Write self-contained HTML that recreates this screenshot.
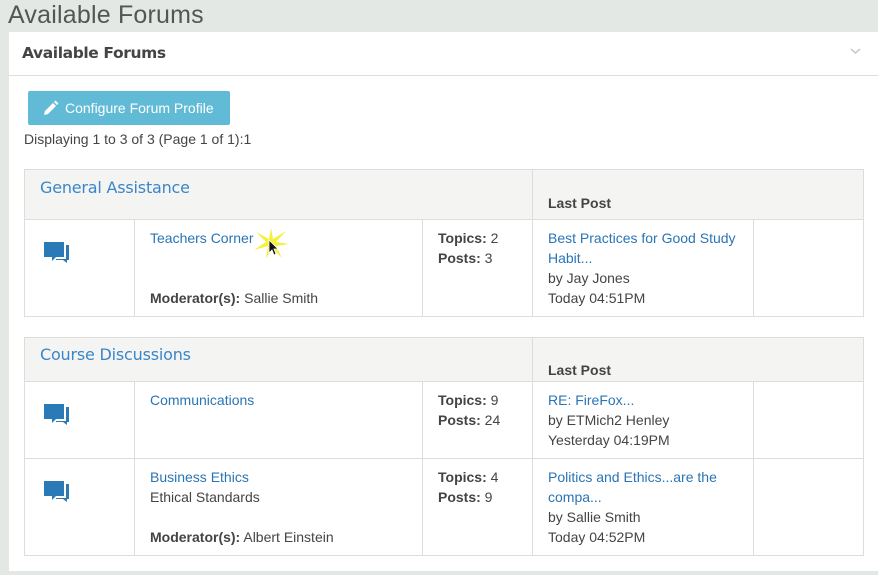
<!DOCTYPE html>
<html><head><style>
*{margin:0;padding:0;box-sizing:border-box}
body{width:878px;height:575px;background:#e4e8e5;font-family:"Liberation Sans",sans-serif;font-size:14px;color:#444;position:relative;overflow:hidden}
.a{position:absolute}
.panel{left:9px;top:32px;width:869px;height:539px;background:#fff}
.lnk{color:#2a75b5}
.cell{position:absolute;border:1px solid #ddd}
.hd{background:#f4f4f3}
.t{position:absolute;white-space:nowrap;line-height:20px}
b{font-weight:bold;color:#444}
.ic{position:absolute;width:26px;height:22px}
</style></head><body>
<div class="a" style="left:8px;top:0;font-size:25px;color:#555;line-height:30px;letter-spacing:0.2px">Available Forums</div>
<div class="a panel"></div>
<div class="a" style="left:22px;top:44px;font-size:15.5px;font-weight:bold;color:#444;font-family:'DejaVu Sans',sans-serif;letter-spacing:-0.4px">Available Forums</div>
<svg class="a" style="left:850px;top:48px" width="11" height="7" viewBox="0 0 11 7"><path d="M1 1L5.5 5L10 1" fill="none" stroke="#c4c4c4" stroke-width="1.5"/></svg>
<div class="a" style="left:9px;top:75px;width:869px;height:1px;background:#ddd"></div>
<div class="a" style="left:28px;top:91px;width:202px;height:34px;background:#62bbd6;border-radius:2px;color:#fff;font-size:14px;line-height:34px;padding-left:37px">Configure Forum Profile</div>
<svg class="a" style="left:43px;top:100px" width="16" height="16" viewBox="0 0 16 16"><path d="M2 11 L10 3 L13 6 L5 14 L1 15 Z M11 2 L12.5 0.5 L15.5 3.5 L14 5 Z" fill="#fff"/></svg>
<div class="t" style="left:24px;top:129px">Displaying 1 to 3 of 3 (Page 1 of 1):1</div>

<div class="cell hd" style="left:24px;top:169px;width:509px;height:51px"></div>
<div class="cell hd" style="left:532px;top:169px;width:332px;height:51px"></div>
<div class="t" style="left:40px;top:178px;font-size:16px;font-family:'DejaVu Sans',sans-serif;color:#3a86c8;letter-spacing:-0.2px">General Assistance</div>
<div class="t" style="left:548px;top:193px"><b>Last Post</b></div>
<div class="cell" style="left:24px;top:219px;width:111px;height:98px"></div>
<div class="cell" style="left:134px;top:219px;width:289px;height:98px"></div>
<div class="cell" style="left:422px;top:219px;width:111px;height:98px"></div>
<div class="cell" style="left:532px;top:219px;width:222px;height:98px"></div>
<div class="cell" style="left:753px;top:219px;width:111px;height:98px"></div>
<svg class="ic" style="left:44px;top:242px" viewBox="0 0 26 22"><path d="M0 0H20V15H12L8 19V15H0Z" fill="#2a7ab8"/><path d="M22 3H25V18H23V21L19 18H12V17H22V3Z" fill="#2a7ab8"/></svg>
<div class="t lnk" style="left:150px;top:228px">Teachers Corner</div>
<svg class="a" style="left:252px;top:226px" width="38" height="34" viewBox="0 0 38 34"><path d="M19 2L21 13L34 5L24 16L37 18L24 20L30 32L20 22L14 33L16 20L2 24L14 16L4 6L17 13Z" fill="#f5f03a"/><path d="M17 14V27L20 24L22 29L24 28L22 23H26Z" fill="#111" stroke="#fff" stroke-width=".8"/></svg>
<div class="t" style="left:150px;top:288px"><b>Moderator(s):</b> Sallie Smith</div>
<div class="t" style="left:438px;top:228px"><b>Topics:</b> 2<br><b>Posts:</b> 3</div>
<div class="t" style="left:548px;top:228px"><span class="lnk">Best Practices for Good Study<br>Habit...</span><br>by Jay Jones<br>Today 04:51PM</div>

<div class="cell hd" style="left:24px;top:337px;width:509px;height:45px"></div>
<div class="cell hd" style="left:532px;top:337px;width:332px;height:45px"></div>
<div class="t" style="left:40px;top:345px;font-size:16px;font-family:'DejaVu Sans',sans-serif;color:#3a86c8;letter-spacing:-0.2px">Course Discussions</div>
<div class="t" style="left:548px;top:360px"><b>Last Post</b></div>
<div class="cell" style="left:24px;top:381px;width:111px;height:78px"></div>
<div class="cell" style="left:134px;top:381px;width:289px;height:78px"></div>
<div class="cell" style="left:422px;top:381px;width:111px;height:78px"></div>
<div class="cell" style="left:532px;top:381px;width:222px;height:78px"></div>
<div class="cell" style="left:753px;top:381px;width:111px;height:78px"></div>
<svg class="ic" style="left:44px;top:404px" viewBox="0 0 26 22"><path d="M0 0H20V15H12L8 19V15H0Z" fill="#2a7ab8"/><path d="M22 3H25V18H23V21L19 18H12V17H22V3Z" fill="#2a7ab8"/></svg>
<div class="t lnk" style="left:150px;top:390px">Communications</div>
<div class="t" style="left:438px;top:390px"><b>Topics:</b> 9<br><b>Posts:</b> 24</div>
<div class="t" style="left:548px;top:390px"><span class="lnk">RE: FireFox...</span><br>by ETMich2 Henley<br>Yesterday 04:19PM</div>

<div class="cell" style="left:24px;top:458px;width:111px;height:98px"></div>
<div class="cell" style="left:134px;top:458px;width:289px;height:98px"></div>
<div class="cell" style="left:422px;top:458px;width:111px;height:98px"></div>
<div class="cell" style="left:532px;top:458px;width:222px;height:98px"></div>
<div class="cell" style="left:753px;top:458px;width:111px;height:98px"></div>
<svg class="ic" style="left:44px;top:481px" viewBox="0 0 26 22"><path d="M0 0H20V15H12L8 19V15H0Z" fill="#2a7ab8"/><path d="M22 3H25V18H23V21L19 18H12V17H22V3Z" fill="#2a7ab8"/></svg>
<div class="t" style="left:150px;top:467px"><span class="lnk">Business Ethics</span><br>Ethical Standards</div>
<div class="t" style="left:150px;top:527px"><b>Moderator(s):</b> Albert Einstein</div>
<div class="t" style="left:438px;top:467px"><b>Topics:</b> 4<br><b>Posts:</b> 9</div>
<div class="t" style="left:548px;top:467px"><span class="lnk">Politics and Ethics...are the<br>compa...</span><br>by Sallie Smith<br>Today 04:52PM</div>
</body></html>
